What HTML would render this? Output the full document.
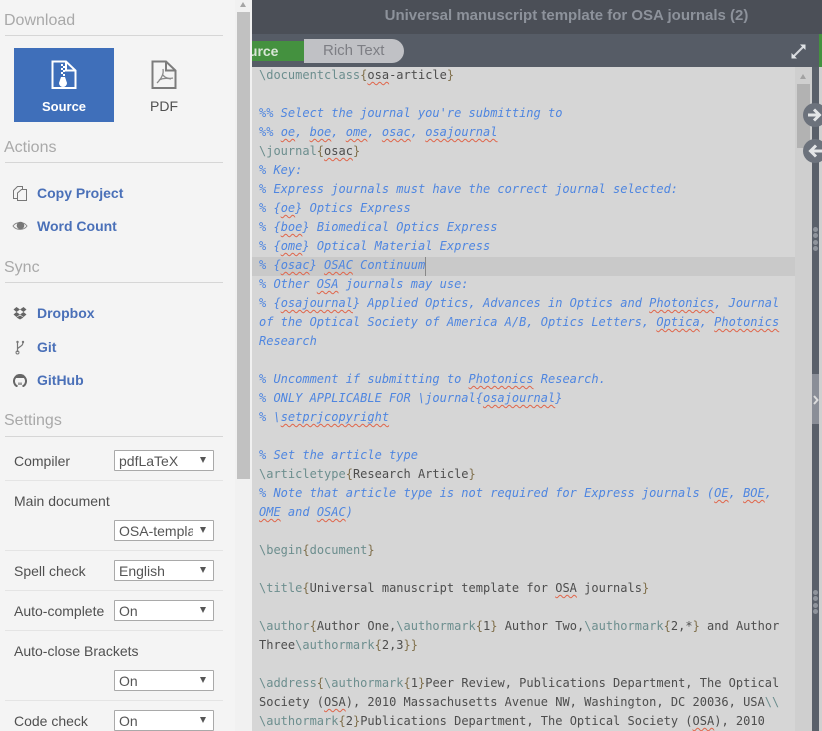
<!DOCTYPE html>
<html><head><meta charset="utf-8">
<style>
html,body{margin:0;padding:0;width:822px;height:731px;overflow:hidden;background:#f4f4f4}
body{position:relative;font-family:"Liberation Sans",sans-serif}
.a{position:absolute}
.h{position:absolute;left:4px;font-size:16px;color:#a9a9a9;line-height:20px}
.r{position:absolute;left:5px;width:218px;height:1px;background:#d6d6d6}
.l{position:absolute;left:37px;font-size:14px;font-weight:bold;color:#4a70b8;line-height:18px;white-space:nowrap}
.s{position:absolute;left:14px;font-size:14px;color:#505050;line-height:18px;white-space:nowrap}
.sel{position:absolute;left:114px;width:98px;height:19px;border:1px solid #a9a9a9;background:#fff;font-size:14px;color:#555;line-height:21px;padding:0;overflow:hidden;white-space:nowrap;border-radius:1px}
.sel span{position:absolute;left:4px;top:0;width:74px;overflow:hidden}
.sel i{position:absolute;right:7px;top:6px;width:0;height:0;border-left:3.5px solid transparent;border-right:3.5px solid transparent;border-top:6px solid #555}
#code{position:absolute;left:259px;top:66px;width:536px;height:665px;overflow:hidden;font-family:"DejaVu Sans Mono",monospace;font-size:12px;line-height:19px;color:#4d4d4d}
#code div{height:19px;white-space:pre}
.c{color:#4f86e0;font-style:italic}
.k{color:#6c8e8e}
.b{color:#80704c}
u{text-decoration:underline wavy #e0654a 1px;text-underline-offset:2px;text-decoration-skip-ink:none}
.dot{position:absolute;left:813px;width:5px;height:5px;border-radius:50%;background:#8f949c}
</style></head>
<body>
<!-- sidebar -->
<div class="a" style="left:0;top:0;width:237px;height:731px;background:#f4f4f4"></div>
<div class="h" style="top:11px">Download</div><div class="r" style="top:35px"></div>
<div class="a" style="left:14px;top:48px;width:100px;height:74px;background:#3f6fba"></div>
<svg class="a" style="left:51px;top:60px" width="26" height="30" viewBox="0 0 26 30"><path d="M1.500 1.500H15L24.500 10.500V28H1.500Z" fill="none" stroke="#fff" stroke-width="2"/><path d="M15 1.500V10.500H24.500" fill="none" stroke="#fff" stroke-width="2"/><path d="M10 4h2v2h-2zM12 6h2v2h-2zM10 8h2v2h-2zM12 10h2v2h-2zM10 12h2v2h-2zM12 14h2v2h-2z" fill="#fff"/><path d="M10 17h4l2 6a3.500 3.500 0 1 1-8 0Z" fill="#fff"/></svg>
<div class="a" style="left:14px;top:98px;width:100px;text-align:center;color:#fff;font-weight:bold;font-size:13px;line-height:17px">Source</div>
<svg class="a" style="left:151px;top:60px" width="26" height="30" viewBox="0 0 26 30"><path d="M1.500 1.500H15L24.500 10.500V28H1.500Z" fill="none" stroke="#7c7c7c" stroke-width="2"/><path d="M15 1.500V10.500H24.500" fill="none" stroke="#7c7c7c" stroke-width="2"/><path d="M12 9c1 5-2 10-6 14M12 15c2 3 6 4 10 3M8 20c4-2 8-2 12-1" fill="none" stroke="#8a8a8a" stroke-width="1.300"/></svg>
<div class="a" style="left:114px;top:98px;width:100px;text-align:center;color:#505050;font-size:14px;line-height:17px">PDF</div>
<div class="h" style="top:138px">Actions</div><div class="r" style="top:162px"></div>
<svg class="a" style="left:13px;top:186px" width="15" height="15" viewBox="0 0 15 15"><path d="M.5 12.500V4.500L4.500 .5H9.500V12.500Z" fill="none" stroke="#777"/><path d="M4.500 14.500V7L8.500 3.500H13.500V14.500Z" fill="#f4f4f4" stroke="#777"/></svg>
<div class="l" style="top:184px">Copy Project</div>
<svg class="a" style="left:12px;top:220px" width="16" height="12" viewBox="0 0 16 12"><path d="M1 6C4 1.500 12 1.500 15 6 12 10.500 4 10.500 1 6Z" fill="#f4f4f4" stroke="#888" stroke-width="1"/><circle cx="8.500" cy="5.500" r="3.800" fill="#777"/></svg>
<div class="l" style="top:217px">Word Count</div>
<div class="h" style="top:258px">Sync</div><div class="r" style="top:282px"></div>
<svg class="a" style="left:13px;top:306px" width="14" height="14" viewBox="0 0 14 14"><path d="M3.500 1 7 3.500 3.500 6 0.500 3.500ZM10.500 1 13.500 3.500 10.500 6 7 3.500ZM3.500 6 7 8.500 3.500 11 0.500 8.500ZM10.500 6 13.500 8.500 10.500 11 7 8.500ZM3.500 11.500 7 9.500 10.500 11.500 7 13.500Z" fill="#666"/></svg>
<div class="l" style="top:304px">Dropbox</div>
<svg class="a" style="left:14px;top:340px" width="12" height="15" viewBox="0 0 12 15"><path d="M3.500 1V12M3.500 9C5 6 9 7 9 2" fill="none" stroke="#777" stroke-width="1.200"/><circle cx="3.500" cy="12.500" r="1.500" fill="none" stroke="#777"/><circle cx="9" cy="2" r="1.200" fill="#777"/><circle cx="3.500" cy="2" r="1.200" fill="#777"/></svg>
<div class="l" style="top:338px">Git</div>
<svg class="a" style="left:13px;top:373px" width="14" height="14" viewBox="0 0 14 14"><path d="M4.500 13.500A6 6 0 1 1 9.500 13.500" fill="none" stroke="#666" stroke-width="2"/><path d="M3.500 1.500 5 2.500H9L10.500 1.500 11 5H3Z" fill="#666"/><path d="M5 9.500H9V12H5Z" fill="#666" opacity=".6"/></svg>
<div class="l" style="top:371px">GitHub</div>
<div class="h" style="top:411px">Settings</div><div class="r" style="top:436px"></div>
<div class="s" style="top:452px">Compiler</div>
<div class="sel" style="top:450px"><span>pdfLaTeX</span><i></i></div>
<div class="r" style="top:480px;background:#e4e4e4"></div>
<div class="s" style="top:492px">Main document</div>
<div class="sel" style="top:520px"><span>OSA-template</span><i></i></div>
<div class="r" style="top:550px;background:#e4e4e4"></div>
<div class="s" style="top:562px">Spell check</div>
<div class="sel" style="top:560px"><span>English</span><i></i></div>
<div class="r" style="top:590px;background:#e4e4e4"></div>
<div class="s" style="top:602px">Auto-complete</div>
<div class="sel" style="top:600px"><span>On</span><i></i></div>
<div class="r" style="top:630px;background:#e4e4e4"></div>
<div class="s" style="top:642px">Auto-close Brackets</div>
<div class="sel" style="top:670px"><span>On</span><i></i></div>
<div class="r" style="top:700px;background:#e4e4e4"></div>
<div class="s" style="top:712px">Code check</div>
<div class="sel" style="top:710px"><span>On</span><i></i></div>
<!-- sidebar scrollbar -->
<div class="a" style="left:235px;top:0;width:17px;height:731px;background:#f1f1f1"></div>
<div class="a" style="left:237px;top:12px;width:13px;height:467px;background:#c1c1c1"></div>
<div class="a" style="left:240px;top:2px;width:0;height:0;border-left:3.500px solid transparent;border-right:3.500px solid transparent;border-bottom:5px solid #a5a5a5"></div>
<!-- header -->
<div class="a" style="left:252px;top:0;width:570px;height:34px;background:#4b4f57"></div>
<div class="a" style="left:252px;top:6px;width:629px;text-align:center;color:#8d929b;font-weight:bold;font-size:15px;line-height:20px;white-space:nowrap">Universal manuscript template for OSA journals (2)</div>
<div class="a" style="left:252px;top:34px;width:560px;height:33px;background:#565c66"></div>
<div class="a" style="left:252px;top:41px;width:52px;height:20px;background:#44913f;overflow:hidden"><div style="position:absolute;left:-21px;top:0;width:60px;color:#d8e6d6;font-weight:bold;font-size:14px;line-height:20px">Source</div></div>
<div class="a" style="left:304px;top:39px;width:100px;height:24px;background:#c0c1c5;border-radius:0 12px 12px 0;color:#7d7e84;font-size:15px;line-height:24px;text-indent:19px">Rich Text</div>
<svg class="a" style="left:790px;top:43px" width="17" height="17" viewBox="0 0 17 17"><path d="M3 14 14 3" stroke="#d5d8dc" stroke-width="2"/><path d="M1.500 10V15.500H7ZM15.500 7V1.500H10Z" fill="#e0e3e6"/></svg>
<!-- editor -->
<div class="a" style="left:252px;top:67px;width:543px;height:664px;background:#d6d6d6"></div>
<div class="a" style="left:252px;top:257px;width:543px;height:19px;background:#c9c9c9"></div>
<div class="a" style="left:425px;top:257px;width:1px;height:19px;background:#888"></div>
<div class="a" style="left:795px;top:67px;width:17px;height:664px;background:#cfcfcf"></div>
<div class="a" style="left:797px;top:84px;width:13px;height:64px;background:#b2b2b2"></div>
<div class="a" style="left:800px;top:74px;width:0;height:0;border-left:3.500px solid transparent;border-right:3.500px solid transparent;border-bottom:5px solid #a2a2a2"></div>
<div id="code"><div><span class="k">\documentclass</span><span class="b">{</span><u>osa</u>-article<span class="b">}</span></div><div> </div><div class="c">%% Select the journal you're submitting to</div><div class="c">%% <u>oe</u>, <u>boe</u>, <u>ome</u>, <u>osac</u>, <u>osajournal</u></div><div><span class="k">\journal</span><span class="b">{</span><u>osac</u><span class="b">}</span></div><div class="c">% Key:</div><div class="c">% Express journals must have the correct journal selected:</div><div class="c">% {<u>oe</u>} Optics Express</div><div class="c">% {<u>boe</u>} Biomedical Optics Express</div><div class="c">% {<u>ome</u>} Optical Material Express</div><div class="c">% {<u>osac</u>} <u>OSAC</u> Continuum</div><div class="c">% Other <u>OSA</u> journals may use:</div><div class="c">% {<u>osajournal</u>} Applied Optics, Advances in Optics and <u>Photonics</u>, Journal</div><div class="c">of the Optical Society of America A/B, Optics Letters, <u>Optica</u>, <u>Photonics</u></div><div class="c">Research</div><div> </div><div class="c">% Uncomment if submitting to <u>Photonics</u> Research.</div><div class="c">% ONLY APPLICABLE FOR \journal{<u>osajournal</u>}</div><div class="c">% \<u>setprjcopyright</u></div><div> </div><div class="c">% Set the article type</div><div><span class="k">\articletype</span><span class="b">{</span>Research Article<span class="b">}</span></div><div class="c">% Note that article type is not required for Express journals (<u>OE</u>, <u>BOE</u>,</div><div class="c"><u>OME</u> and <u>OSAC</u>)</div><div> </div><div><span class="k">\begin</span><span class="b">{</span><span class="k">document</span><span class="b">}</span></div><div> </div><div><span class="k">\title</span><span class="b">{</span>Universal manuscript template for <u>OSA</u> journals<span class="b">}</span></div><div> </div><div><span class="k">\author</span><span class="b">{</span>Author One,<span class="k">\authormark</span><span class="b">{</span>1<span class="b">}</span> Author Two,<span class="k">\authormark</span><span class="b">{</span>2,*<span class="b">}</span> and Author</div><div>Three<span class="k">\authormark</span><span class="b">{</span>2,3<span class="b">}}</span></div><div> </div><div><span class="k">\address</span><span class="b">{</span><span class="k">\authormark</span><span class="b">{</span>1<span class="b">}</span>Peer Review, Publications Department, The Optical</div><div>Society (<u>OSA</u>), 2010 Massachusetts Avenue NW, Washington, DC 20036, USA<span class="k">\\</span></div><div><span class="k">\authormark</span><span class="b">{</span>2<span class="b">}</span>Publications Department, The Optical Society (<u>OSA</u>), 2010</div></div>
<!-- divider -->
<div class="a" style="left:812px;top:67px;width:7px;height:664px;background:#5a606a"></div>
<div class="a" style="left:812px;top:34px;width:7px;height:33px;background:#565c66"></div>
<div class="a" style="left:819px;top:34px;width:3px;height:33px;background:#44913f"></div>
<div class="a" style="left:819px;top:67px;width:3px;height:664px;background:#d0d0d0"></div>
<div class="a" style="left:812px;top:374px;width:7px;height:50px;background:#8a8e97"></div>
<svg class="a" style="left:812px;top:394px" width="7" height="12" viewBox="0 0 7 12"><path d="M2 2 5.500 6 2 10" fill="none" stroke="#dcdcdc" stroke-width="2"/></svg>
<div class="dot" style="top:227px"></div><div class="dot" style="top:233px"></div><div class="dot" style="top:240px"></div><div class="dot" style="top:246px"></div>
<div class="dot" style="top:590px"></div><div class="dot" style="top:596px"></div><div class="dot" style="top:603px"></div><div class="dot" style="top:609px"></div>
<!-- round buttons -->
<svg class="a" style="left:803px;top:103px" width="19" height="24" viewBox="0 0 19 24"><circle cx="12" cy="12" r="12" fill="#6c727c"/><path d="M5 12H16M11 6.500 16.500 12 11 17.500" fill="none" stroke="#e4e6e8" stroke-width="3"/></svg>
<svg class="a" style="left:803px;top:139px" width="19" height="24" viewBox="0 0 19 24"><circle cx="12" cy="12" r="12" fill="#6c727c"/><path d="M19 12H8M13 6.500 7.500 12 13 17.500" fill="none" stroke="#e4e6e8" stroke-width="3"/></svg>
</body></html>
